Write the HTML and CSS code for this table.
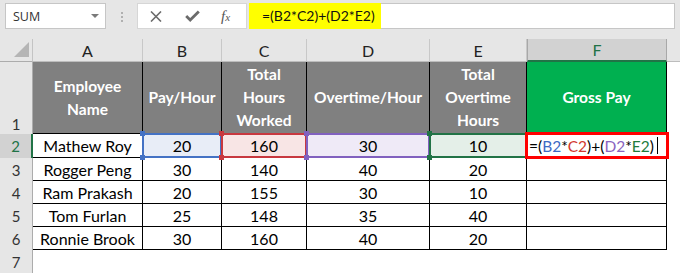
FILE: index.html
```html
<!DOCTYPE html>
<html lang="en">
<head>
  <meta charset="UTF-8" />
  <title>Gross Pay</title>
  <link rel="stylesheet" href="styles.css">
</head>
<body>

<div class="app">
  <!-- Name box + formula bar -->
  <div class="formula-bar">
    <div class="name-box">
      <span>SUM</span>
      <svg width="8" height="4" viewBox="0 0 8 4"><path d="M0 0 H8 L4 4 Z" fill="#7a7a7a"/></svg>
    </div>
    <div class="grip"><i></i><i></i><i></i></div>
    <div class="fx-buttons">
      <svg class="btn-x" width="12" height="11" viewBox="0 0 12 11">
        <path d="M1 0.5 L11 10.5 M11 0.5 L1 10.5" stroke="#6b6b6b" stroke-width="1.6" fill="none"/>
      </svg>
      <svg class="btn-ok" width="15" height="12" viewBox="0 0 15 12">
        <path d="M1.2 6 L5.2 10 L13.8 1.4" stroke="#6b6b6b" stroke-width="2.8" fill="none"/>
      </svg>
      <span class="fx">f<small>x</small></span>
    </div>
    <div class="formula-input">
      <span class="formula-text">=(B2*C2)+(D2*E2)</span>
    </div>
  </div>

  <!-- Sheet -->
  <div class="sheet">
    <!-- column headers -->
    <div class="corner">
      <svg width="15" height="15" viewBox="0 0 15 15"><path d="M15 0 V15 H0 Z" fill="#b5b5b5"/></svg>
    </div>
    <div class="col">A</div>
    <div class="col">B</div>
    <div class="col">C</div>
    <div class="col">D</div>
    <div class="col">E</div>
    <div class="col sel">F</div>
    <div class="col last"></div>

    <!-- row 1 -->
    <div class="rh bottom">1</div>
    <div class="th">Employee<br>Name</div>
    <div class="th">Pay/Hour</div>
    <div class="th">Total<br>Hours<br>Worked</div>
    <div class="th">Overtime/Hour</div>
    <div class="th">Total<br>Overtime<br>Hours</div>
    <div class="th gross">Gross Pay</div>
    <div class="blank"></div>

    <!-- row 2 -->
    <div class="rh sel">2</div>
    <div class="td">Mathew Roy</div>
    <div class="td ref ref-b">20</div>
    <div class="td ref ref-c">160</div>
    <div class="td ref ref-d">30</div>
    <div class="td ref ref-e">10</div>
    <div class="td edit">=(<span class="c-b">B2</span>*<span class="c-c">C2</span>)+(<span class="c-d">D2</span>*<span class="c-e">E2</span>)<span class="caret"></span></div>
    <div class="blank"></div>

    <!-- row 3 -->
    <div class="rh">3</div>
    <div class="td">Rogger Peng</div>
    <div class="td">30</div>
    <div class="td">140</div>
    <div class="td">40</div>
    <div class="td">20</div>
    <div class="td"></div>
    <div class="blank"></div>

    <!-- row 4 -->
    <div class="rh">4</div>
    <div class="td">Ram Prakash</div>
    <div class="td">20</div>
    <div class="td">155</div>
    <div class="td">30</div>
    <div class="td">10</div>
    <div class="td"></div>
    <div class="blank"></div>

    <!-- row 5 -->
    <div class="rh">5</div>
    <div class="td">Tom Furlan</div>
    <div class="td">25</div>
    <div class="td">148</div>
    <div class="td">35</div>
    <div class="td">40</div>
    <div class="td"></div>
    <div class="blank"></div>

    <!-- row 6 -->
    <div class="rh">6</div>
    <div class="td">Ronnie Brook</div>
    <div class="td">30</div>
    <div class="td">160</div>
    <div class="td">40</div>
    <div class="td">20</div>
    <div class="td"></div>
    <div class="blank"></div>

    <!-- row 7 -->
    <div class="rh">7</div>
    <div class="blank"></div>
    <div class="blank"></div>
    <div class="blank"></div>
    <div class="blank"></div>
    <div class="blank"></div>
    <div class="blank"></div>
    <div class="blank"></div>
  </div>
</div>

</body>
</html>
```

FILE: styles.css
```css
* { box-sizing: border-box; }
body { margin: 0; background: #fff; font-family: Lato, "Open Sans", sans-serif; }
.app { width: 680px; height: 273px; overflow: hidden; }

/* formula bar */
.formula-bar { display: flex; align-items: flex-start; height: 39px; padding: 3px 0 0 5px; background: #e6e6e6; }
.name-box { display: flex; align-items: center; justify-content: space-between; width: 101px; height: 26px; padding: 0 6px 0 7px; background: #fff; border: 1px solid #c6c6c6; font: 12.5px "Open Sans", sans-serif; color: #333; }
.grip { display: flex; flex-direction: column; gap: 2px; margin: 9px 0 0 15px; }
.grip i { width: 2px; height: 2px; background: #b0b0b0; }
.fx-buttons { display: flex; align-items: center; width: 110px; height: 26px; margin-left: 14px; padding-left: 12px; background: #fff; border: 1px solid #d6d6d6; }
.btn-ok { margin-left: 23px; }
.fx { margin-left: 21px; font: italic 15px "Liberation Serif", serif; color: #555; }
.fx small { font-size: 11px; }
.formula-input { display: flex; flex: 1; height: 26px; margin: 0 5px 0 2px; background: #fff; border: 1px solid #c6c6c6; }
.formula-text { width: 132px; height: 26px; margin: -1px 0 -1px -1px; padding-left: 13px; background: #ff0; font-size: 14px; line-height: 26px; color: #111; }

/* sheet grid */
.sheet { display: grid; grid-template-columns: 33px 110px 79px 85px 123px 97px 140px 13px; grid-template-rows: 23px 72px 24px repeat(5, 23px); font-size: 16px; color: #000; }
.corner { display: flex; justify-content: flex-end; align-items: flex-end; padding: 0 3px 4px 0; background: #e6e6e6; border-right: 1px solid #c4c4c4; border-bottom: 1px solid #acacac; }
.col { display: flex; align-items: center; justify-content: center; background: #e6e6e6; border-right: 1px solid #c8c8c8; border-bottom: 1px solid #bdbdbd; color: #222; font-size: 16px; }
.col.sel { background: #d2d2d2; color: #217346; border-left: 1px solid #a8a8a8; border-right: 1px solid #a8a8a8; border-bottom: 2px solid #217346; }
.col.last { border-right: 0; }
.rh { display: flex; align-items: center; justify-content: center; background: #e6e6e6; border-right: 1px solid #acacac; color: #333; font-size: 15px; }
.rh.bottom { align-items: flex-end; padding-bottom: 1px; }
.rh.sel { background: #d2d2d2; color: #217346; border-right: 2px solid #217346; }

.th { display: flex; align-items: center; justify-content: center; text-align: center; font-size: 15.5px; line-height: 23px; background: #808080; color: #fff; font-weight: bold; border-right: 1px solid #000; border-bottom: 1px solid #000; }
.th.gross { background: #00b050; }
.td { display: flex; align-items: center; justify-content: center; background: #fff; border-right: 1px solid #000; border-bottom: 1px solid #000; white-space: nowrap; }
.blank { background: #fff; }

/* coloured formula references */
.ref { position: relative; background: var(--bg); }
.ref::before { content: ""; position: absolute; inset: -1px; border: 2px solid var(--c); }
.ref::after { content: ""; position: absolute; left: -3px; top: -3px; width: 5px; height: 5px; background: var(--c); box-shadow: 0 24px 0 var(--c); }
.ref-b { --c: #4472c4; --bg: #e8edf7; }
.ref-c { --c: #c8383f; --bg: #f8e5e5; }
.ref-d { --c: #8161bf; --bg: #efeaf7; }
.ref-e { --c: #217346; --bg: #e4efe8; }
.c-b { color: #3d6ac4; }
.c-c { color: #d23a2f; }
.c-d { color: #8a64c0; }
.c-e { color: #1e7b3c; }

/* cell in edit mode */
.edit { position: relative; justify-content: flex-start; padding-left: 2px; font-size: 15.5px; }
.edit::before { content: ""; position: absolute; inset: -2px -3px -2px -2px; border: 3px solid #f00; }
.caret { width: 1px; height: 17px; margin-left: 3px; background: #000; }
```
